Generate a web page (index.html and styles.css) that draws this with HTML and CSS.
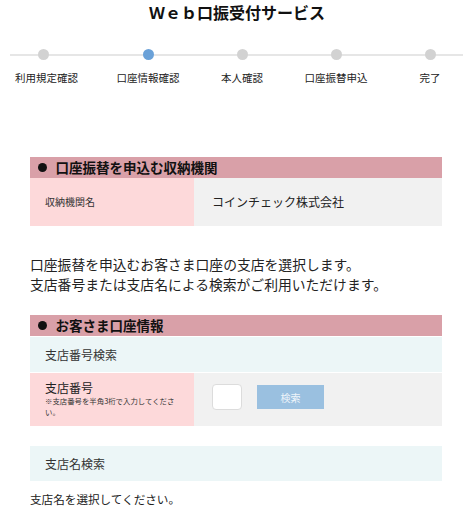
FILE: index.html
```html
<!DOCTYPE html>
<html lang="ja">
<head>
<meta charset="utf-8">
<title>Web口振受付サービス</title>
<link rel="stylesheet" href="styles.css">
</head>
<body>
<header class="page-head">
  <h1 class="page-title">Ｗｅｂ口振受付サービス</h1>
</header>
<ol class="steps">
  <li class="step step-first"><span class="dot"></span><span class="step-label">利用規定確認</span></li>
  <li class="step step-active"><span class="dot"></span><span class="step-label">口座情報確認</span></li>
  <li class="step"><span class="dot"></span><span class="step-label">本人確認</span></li>
  <li class="step"><span class="dot"></span><span class="step-label">口座振替申込</span></li>
  <li class="step"><span class="dot"></span><span class="step-label">完了</span></li>
</ol>
<main class="content">
  <section class="panel">
    <h2 class="panel-head"><span class="bullet"></span>口座振替を申込む収納機関</h2>
    <div class="row row-org">
      <div class="cell-label"><span class="label-small">収納機関名</span></div>
      <div class="cell-value"><span class="value-text">コインチェック株式会社</span></div>
    </div>
  </section>
  <p class="lead">口座振替を申込むお客さま口座の支店を選択します。<br>支店番号または支店名による検索がご利用いただけます。</p>
  <section class="panel">
    <h2 class="panel-head"><span class="bullet"></span>お客さま口座情報</h2>
    <div class="subhead">支店番号検索</div>
    <div class="row row-branch">
      <div class="cell-label cell-label-top">
        <div class="label-main">支店番号</div>
        <div class="label-note">※支店番号を半角3桁で入力してください。</div>
      </div>
      <div class="cell-value cell-value-top">
        <input class="code-input" type="text" maxlength="3">
        <button class="search-btn" type="button">検索</button>
      </div>
    </div>
    <div class="subhead subhead-spaced">支店名検索</div>
    <p class="hint">支店名を選択してください。</p>
  </section>
</main>
</body>
</html>
```
FILE: styles.css
```css
* { box-sizing: border-box; }
html, body { margin: 0; padding: 0; background: #fff; }
body {
  font-family: "Noto Sans CJK JP", "Noto Sans", sans-serif;
  color: #222;
}
.page-head { padding-top: 3px; }
.page-title {
  margin: 0;
  text-align: center;
  font-size: 16px;
  line-height: 18px;
  font-weight: bold;
  color: #111;
}
.steps {
  list-style: none;
  margin: 28px 0 0;
  padding: 0 0 0 3px;
  display: flex;
  gap: 14px;
  position: relative;
}
.steps::before {
  content: "";
  position: absolute;
  left: 10px;
  right: 11px;
  top: 4.5px;
  height: 2px;
  background: #e6e6e6;
}
.step {
  width: 80px;
  display: flex;
  flex-direction: column;
  align-items: center;
  position: relative;
}
.step-first { margin-right: 11px; }
.step-first .step-label { margin-left: 7px; }
.dot {
  width: 11px;
  height: 11px;
  border-radius: 50%;
  background: #d2d2d2;
}
.step-active .dot { background: #6aa1d8; }
.step-label {
  margin-top: 11px;
  font-size: 10.5px;
  line-height: 14px;
  white-space: nowrap;
  color: #222;
}
.content {
  width: 412px;
  margin: 72px 0 0 30px;
}
.panel { margin: 0; }
.panel-head {
  margin: 0;
  height: 21px;
  line-height: 21px;
  padding-left: 7.5px;
  background: #d9a0a8;
  font-size: 13.5px;
  font-weight: bold;
  color: #111;
  display: flex;
  align-items: center;
}
.bullet {
  width: 9px;
  height: 9px;
  border-radius: 50%;
  background: #111;
  margin-right: 9px;
  flex: none;
}
.row {
  display: grid;
  grid-template-columns: 164px 1fr;
}
.row-org { height: 48px; }
.cell-label {
  background: #fdd9da;
  padding: 0 15px;
  display: flex;
  align-items: center;
}
.cell-value {
  background: #f1f1f1;
  padding: 0 18px;
  display: flex;
  align-items: center;
}
.label-small { font-size: 10px; line-height: 14px; color: #333; }
.value-text { font-size: 12px; line-height: 16px; color: #222; }
.lead {
  margin: 28px 0 21px;
  font-size: 13.8px;
  line-height: 20px;
  color: #222;
}
.panel-head + .subhead { margin-top: 1px; }
.subhead {
  height: 35px;
  background: #ecf6f7;
  padding-left: 15px;
  display: flex;
  align-items: center;
  font-size: 12px;
  color: #333;
}
.subhead-spaced { margin-top: 20px; }
.row-branch { margin-top: 1px; }
.cell-label-top {
  display: block;
  padding: 8px 15px 8px;
}
.label-main { font-size: 12px; line-height: 14px; color: #222; }
.label-note { margin-top: 1px; font-size: 7.4px; line-height: 10.8px; color: #333; }
.cell-value-top {
  align-items: flex-start;
  padding-top: 11px;
}
.code-input {
  width: 30px;
  height: 26px;
  margin: 0;
  border: 1px solid #dcdcdc;
  border-radius: 4px;
  background: #fff;
  padding: 0 4px;
  font: inherit;
}
.search-btn {
  width: 67px;
  height: 24px;
  margin: 1px 0 0 15px;
  border: none;
  background: #9ac0e0;
  color: #eef4fa;
  font-family: inherit;
  font-size: 10px;
  padding: 0;
}
.hint {
  margin: 10px 0 0;
  font-size: 11.6px;
  line-height: 16px;
  color: #222;
}
```
